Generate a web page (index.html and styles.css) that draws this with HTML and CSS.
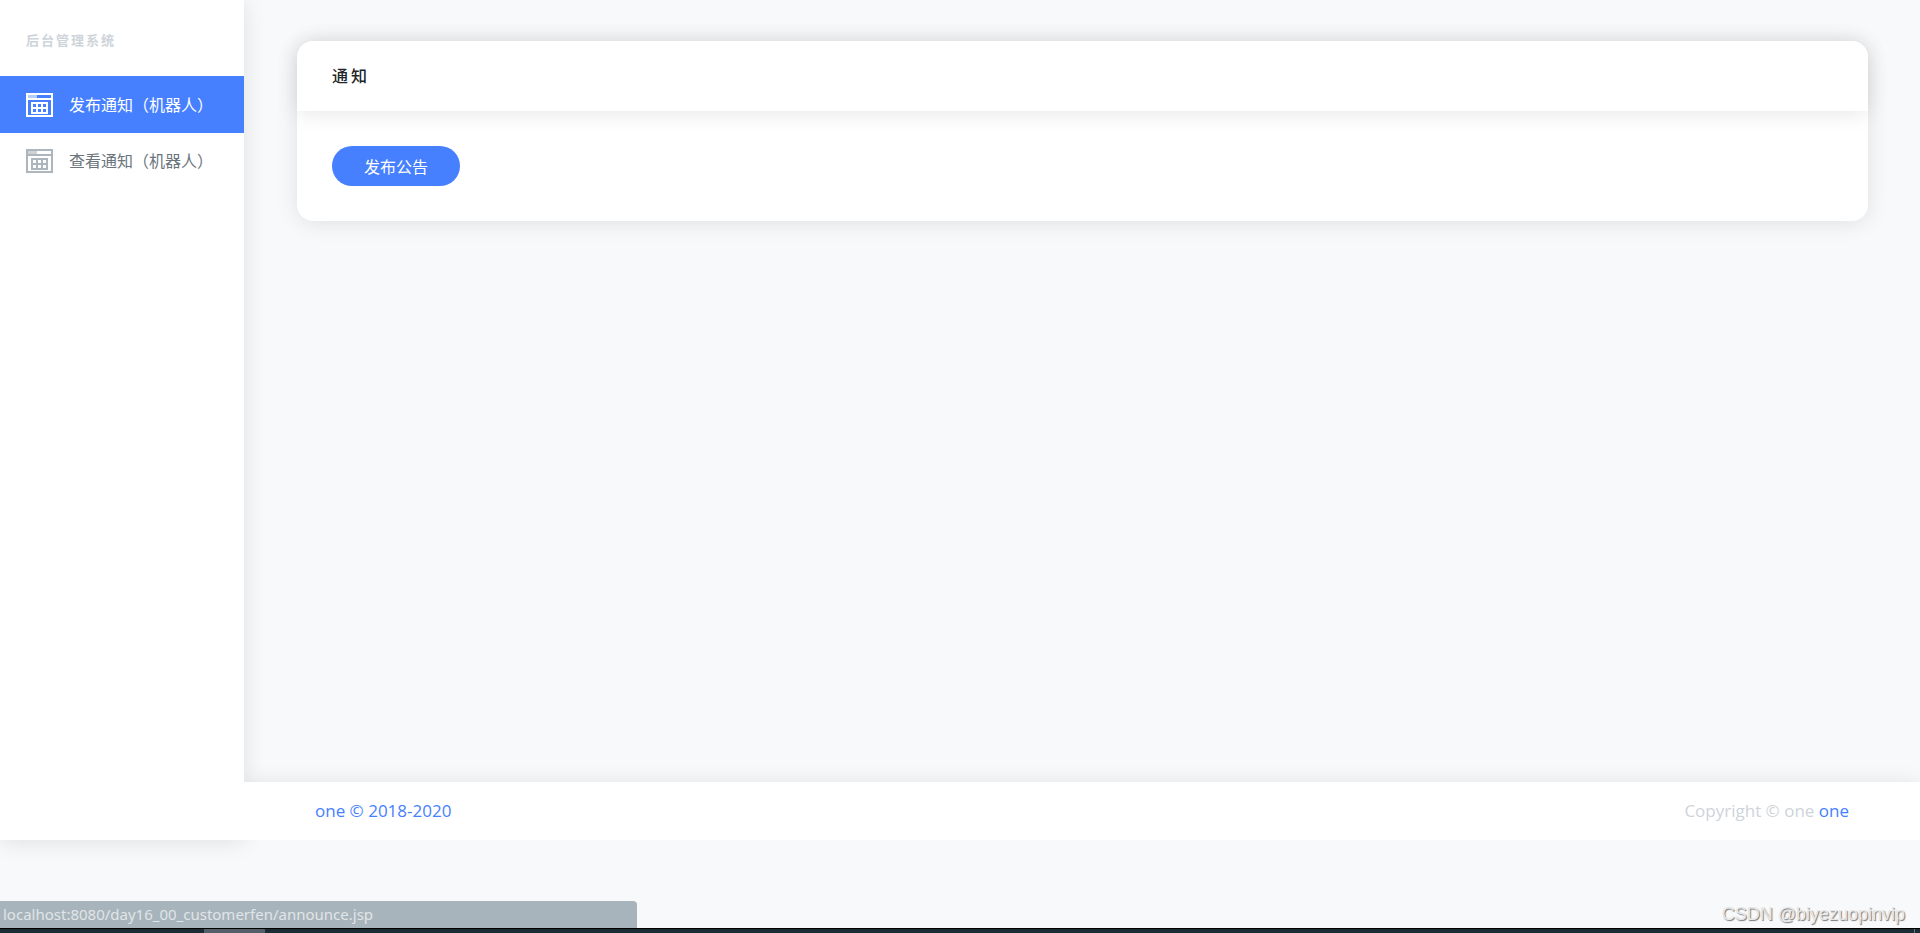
FILE: index.html
```html
<!DOCTYPE html>
<html lang="zh-CN">
<head>
  <meta charset="UTF-8">
  <meta name="viewport" content="width=device-width, initial-scale=1.0">
  <title>后台管理系统</title>
  <link rel="stylesheet" href="styles.css">
</head>
<body>
  <!-- Shared icon for the sidebar links -->
  <svg class="sprite" aria-hidden="true">
    <symbol id="icon-window" viewBox="0 0 27 24">
      <path fill="currentColor" fill-rule="evenodd" d="M0 0h27v24H0zM2 2v3h23V2zM2 7v15h23V7z"/>
      <path fill="currentColor" opacity=".6" d="M2 2h9v3H2z"/>
      <path fill="currentColor" fill-rule="evenodd" d="M5 9h17v12H5zM7 11v3h3v-3zM12 11v3h3v-3zM17 11v3h3v-3zM7 16v3h3v-3zM12 16v3h3v-3zM17 16v3h3v-3z"/>
    </symbol>
  </svg>

  <div class="page">
    <!-- Sidebar navigation -->
    <nav class="sidebar">
      <span class="sidebar-title">后台管理系统</span>
      <a class="sidebar-link active" href="#">
        <svg class="sidebar-icon"><use href="#icon-window"/></svg>
        发布通知（机器人）
      </a>
      <a class="sidebar-link" href="#">
        <svg class="sidebar-icon"><use href="#icon-window"/></svg>
        查看通知（机器人）
      </a>
    </nav>

    <div class="page-holder">
      <!-- Notice card -->
      <main class="content">
        <section class="card">
          <div class="card-header">
            <h1>通知</h1>
          </div>
          <div class="card-body">
            <button class="btn-primary" type="button">发布公告</button>
          </div>
        </section>
      </main>

      <!-- Footer -->
      <footer class="footer">
        <p class="footer-brand">one © 2018-2020</p>
        <p>Copyright © one <a href="#">one</a></p>
      </footer>
    </div>
  </div>

  <!-- Bottom of the window -->
  <div class="bottom">
    <div class="status">localhost:8080/day16_00_customerfen/announce.jsp</div>
    <div class="watermark">CSDN @biyezuopinvip</div>
  </div>
  <div class="taskbar">
    <div class="taskbar-item"></div>
    <div class="taskbar-edge"></div>
  </div>
</body>
</html>
```

FILE: styles.css
```css
* {
  box-sizing: border-box;
}

body {
  margin: 0;
  min-height: 100vh;
  display: flex;
  flex-direction: column;
  background-color: #f8f9fb;
  color: #212529;
  font-family: "Noto Sans", "Noto Sans CJK SC", sans-serif;
  font-size: 16px;
  line-height: 24px;
}

a {
  color: #4680ff;
  text-decoration: none;
}

.sprite {
  position: absolute;
  width: 0;
  height: 0;
}

.page {
  flex: 1;
  display: flex;
}

/* Sidebar */
.sidebar {
  width: 244px;
  padding-top: 28px;
  background-color: #fff;
  box-shadow: 0 2px 22px rgba(0, 0, 0, 0.1);
}

.sidebar-title {
  display: block;
  margin-bottom: 24px;
  padding: 0 26px;
  color: #ced4da;
  font-size: 13px;
  font-weight: bold;
  letter-spacing: 2px;
}

.sidebar-link {
  display: flex;
  align-items: center;
  gap: 16px;
  height: 56px;
  padding: 0 26px;
  color: #6c757d;
  white-space: nowrap;
}

.sidebar-icon {
  flex: none;
  width: 27px;
  height: 24px;
  color: #adb5bd;
}

.sidebar-link.active {
  height: 57px;
  background-color: #4680ff;
  color: #fff;
}

.active .sidebar-icon {
  color: #fff;
}

/* Right hand side */
.page-holder {
  flex: 1;
  display: flex;
  flex-direction: column;
  overflow: hidden;
}

.content {
  flex: 1;
  padding: 41px 52px 41px 53px;
}

.card {
  border-radius: 16px;
  background-color: #fff;
  box-shadow: 0 2px 22px rgba(0, 0, 0, 0.1);
}

.card-header {
  padding: 23px 35px;
  border-radius: 16px 16px 0 0;
  background-color: #fff;
  box-shadow: 0 2px 22px rgba(0, 0, 0, 0.1);
}

.card-header h1 {
  margin: 0;
  font-size: 16px;
  font-weight: 500;
  line-height: 24px;
  letter-spacing: 3px;
}

.card-body {
  padding: 35px;
}

.btn-primary {
  display: block;
  height: 40px;
  padding: 0 32px;
  border: none;
  border-radius: 20px;
  background-color: #4680ff;
  color: #fff;
  font-family: inherit;
  font-size: 16px;
  cursor: pointer;
}

.footer {
  display: flex;
  justify-content: space-between;
  padding: 17px 71px;
  background-color: #fff;
  color: #ced4da;
  font-family: "Open Sans", sans-serif;
  font-size: 17px;
  box-shadow: 0 2px 22px rgba(0, 0, 0, 0.1);
}

.footer p {
  margin: 0;
}

.footer .footer-brand {
  color: #4680ff;
}

/* Status line and watermark */
.bottom {
  display: flex;
  justify-content: space-between;
  align-items: flex-end;
  height: 88px;
}

.status {
  width: 637px;
  height: 27px;
  padding-left: 3px;
  border-top-right-radius: 4px;
  background-color: #a8b4bb;
  color: #e0e5e8;
  font-size: 15px;
  line-height: 27px;
}

.watermark {
  padding-right: 15px;
  color: #e8e8e8;
  font-family: "Liberation Sans", sans-serif;
  font-size: 18px;
  line-height: 28px;
  text-shadow: 1px 1px 1px #777;
}

.taskbar {
  display: flex;
  justify-content: space-between;
  height: 5px;
  padding: 0 5px 0 204px;
  border-top: 1px solid #000;
  background-color: #1d2b34;
}

.taskbar-item {
  width: 61px;
  background-color: #555f69;
}

.taskbar-edge {
  width: 1px;
  background-color: #68747b;
}
```
